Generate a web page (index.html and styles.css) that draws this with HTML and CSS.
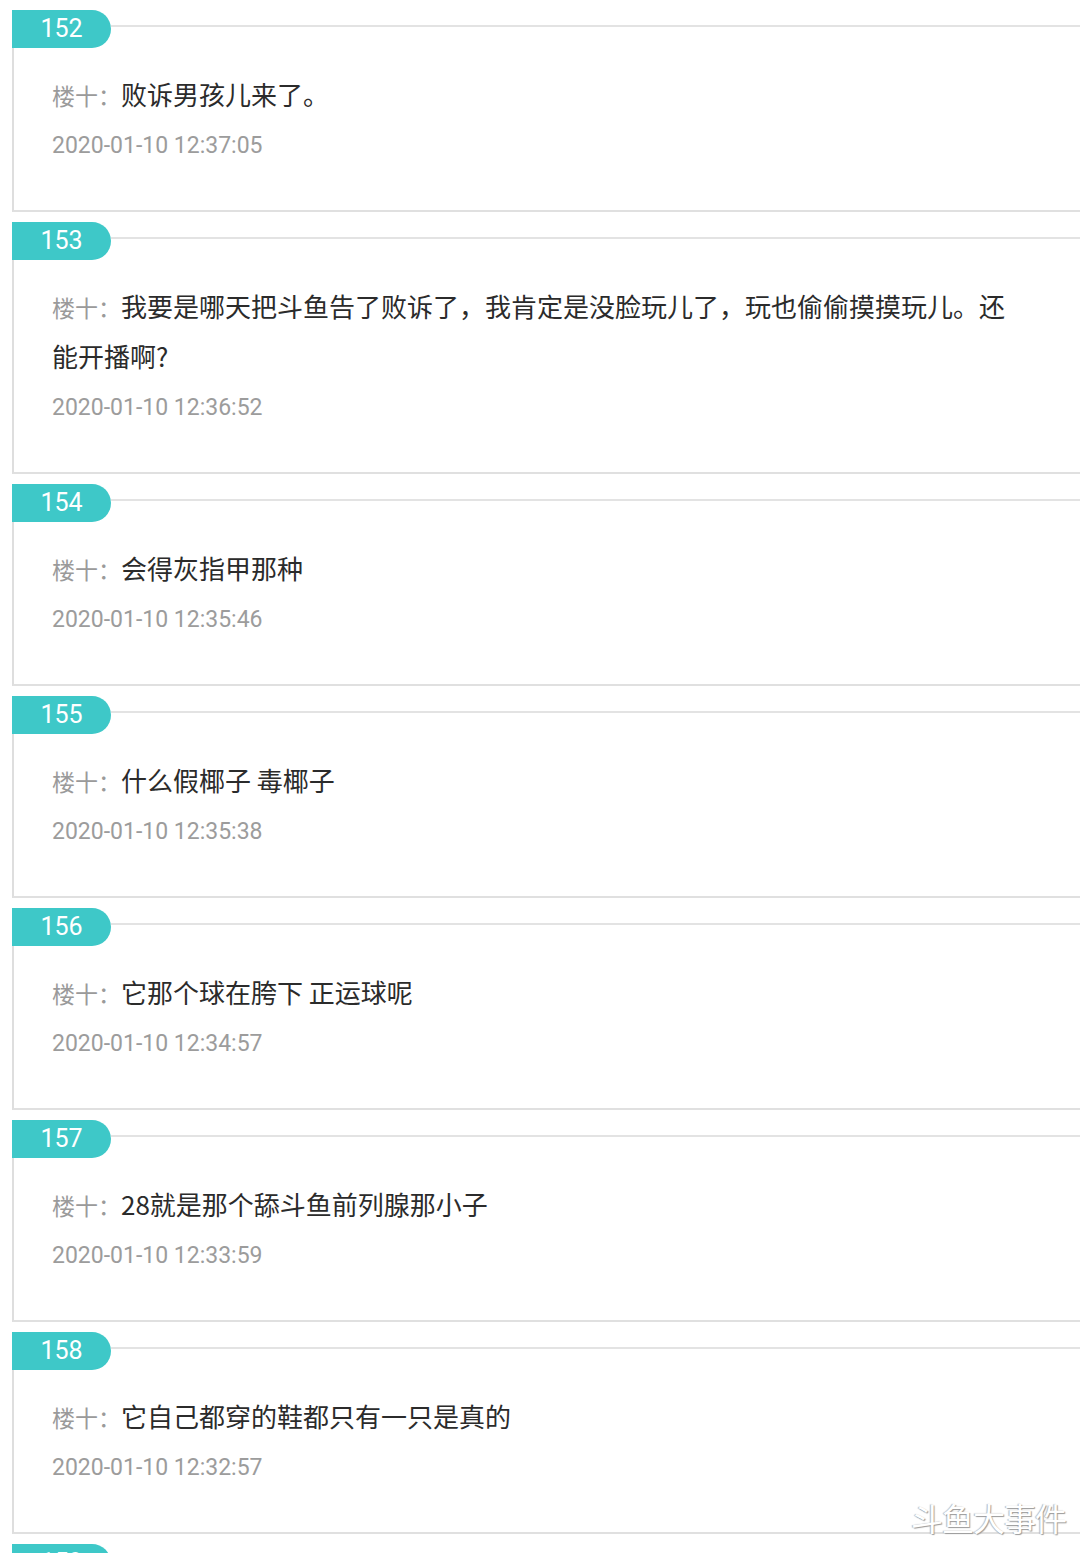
FILE: index.html
```html
<!DOCTYPE html>
<html lang="zh-CN">
<head>
    <meta charset="UTF-8">
    <meta name="viewport" content="width=device-width, initial-scale=1.0">
    <title>楼层</title>
    <link rel="stylesheet" href="styles.css">
</head>
<body>
    <div class="list">
        <div class="floor">
            <div class="floor-head"><span class="num">152</span><span class="rule"></span></div>
            <div class="floor-body">
                <p class="msg"><span class="who">楼十：</span>败诉男孩儿来了。</p>
                <p class="time">2020-01-10 12:37:05</p>
            </div>
        </div>
        <div class="floor">
            <div class="floor-head"><span class="num">153</span><span class="rule"></span></div>
            <div class="floor-body">
                <p class="msg"><span class="who">楼十：</span>我要是哪天把斗鱼告了败诉了，我肯定是没脸玩儿了，玩也偷偷摸摸玩儿。还能开播啊?</p>
                <p class="time">2020-01-10 12:36:52</p>
            </div>
        </div>
        <div class="floor">
            <div class="floor-head"><span class="num">154</span><span class="rule"></span></div>
            <div class="floor-body">
                <p class="msg"><span class="who">楼十：</span>会得灰指甲那种</p>
                <p class="time">2020-01-10 12:35:46</p>
            </div>
        </div>
        <div class="floor">
            <div class="floor-head"><span class="num">155</span><span class="rule"></span></div>
            <div class="floor-body">
                <p class="msg"><span class="who">楼十：</span>什么假椰子 毒椰子</p>
                <p class="time">2020-01-10 12:35:38</p>
            </div>
        </div>
        <div class="floor">
            <div class="floor-head"><span class="num">156</span><span class="rule"></span></div>
            <div class="floor-body">
                <p class="msg"><span class="who">楼十：</span>它那个球在胯下 正运球呢</p>
                <p class="time">2020-01-10 12:34:57</p>
            </div>
        </div>
        <div class="floor">
            <div class="floor-head"><span class="num">157</span><span class="rule"></span></div>
            <div class="floor-body">
                <p class="msg"><span class="who">楼十：</span>28就是那个舔斗鱼前列腺那小子</p>
                <p class="time">2020-01-10 12:33:59</p>
            </div>
        </div>
        <div class="floor">
            <div class="floor-head"><span class="num">158</span><span class="rule"></span></div>
            <div class="floor-body">
                <p class="msg"><span class="who">楼十：</span>它自己都穿的鞋都只有一只是真的</p>
                <p class="time">2020-01-10 12:32:57</p>
            </div>
        </div>
        <div class="floor">
            <div class="floor-head"><span class="num">159</span><span class="rule"></span></div>
        </div>
    </div>

    <div class="watermark">斗鱼大事件</div>
</body>
</html>
```

FILE: styles.css
```css
html, body {
    height: 100%;
}

body {
    margin: 0;
    padding: 10px 0 0 12px;
    background-color: #ffffff;
    font-family: Roboto, "Noto Sans CJK SC", sans-serif;
    color: #333;
    overflow: hidden;
    box-sizing: border-box;
}

.floor {
    margin-bottom: 10px;
}

.floor-head {
    display: flex;
    height: 38px;
}

.num {
    width: 99px;
    height: 38px;
    background-color: #3ec8c8;
    color: #ffffff;
    font-size: 25px;
    line-height: 38px;
    text-align: center;
    border-radius: 0 19px 19px 0;
    flex-shrink: 0;
}

.rule {
    flex: 1;
    margin-top: 15px;
    height: 0;
    border-top: 2px solid #e3e3e3;
}

.floor-body {
    border-left: 2px solid #dedede;
    border-bottom: 2px solid #e0e0e0;
    padding: 21px 55px 39px 38px;
}

.msg {
    margin: 0;
    font-family: "Noto Sans CJK SC", sans-serif;
    font-size: 26px;
    line-height: 50px;
    color: #2b2b2b;
}

.who {
    font-size: 23px;
    line-height: 1;
    color: #9a9a9a;
}

.time {
    margin: 0;
    padding-top: 2px;
    font-family: Roboto, sans-serif;
    font-size: 23px;
    line-height: 50px;
    color: #9c9c9c;
}

.watermark {
    position: absolute;
    right: 14px;
    top: 1497px;
    font-family: "Noto Sans CJK SC", sans-serif;
    font-size: 32px;
    line-height: 40px;
    color: #ffffff;
    letter-spacing: -1px;
    text-shadow: 1px 1px 1px #9a9a9a, -1px 0 1px #b5b5b5;
}
```
